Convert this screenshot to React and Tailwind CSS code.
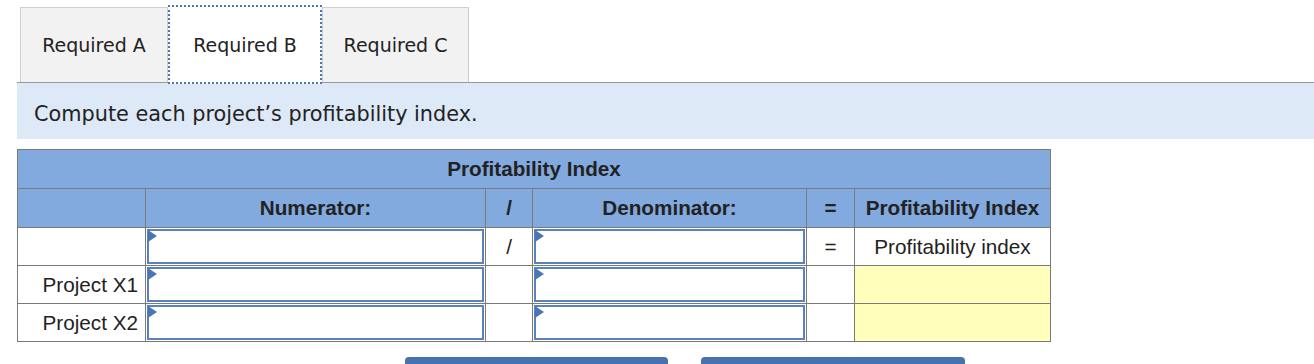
import React from "react";

const tabs = [
  { label: "Required A", w: "w-[148px]" },
  { label: "Required B", w: "w-[154px]", active: true },
  { label: "Required C", w: "w-[147px]" },
];

function Entry() {
  return (
    <div className="relative h-[35px] border-2 border-[#5a83be] bg-white">
      <span className="absolute left-[-1px] top-[-1px] h-0 w-0 border-y-[6px] border-l-[9px] border-y-transparent border-l-[#4a76b5]" />
    </div>
  );
}

function App() {
  const cell = "border border-[#7a7a7a]";
  const head = "border border-[#7a7a7a] bg-[#82aadf] font-bold text-center";

  return (
    <div className="min-h-screen bg-white pl-[17px] pt-[7px] text-[#222]">
      <div className="ml-[3px] flex font-['DejaVu_Sans',sans-serif] text-[19px]">
        {tabs.map((t) =>
          t.active ? (
            <div
              key={t.label}
              className={`${t.w} relative z-10 -my-[2px] flex h-[79px] items-center justify-center bg-white pt-[2px] outline-2 outline-dotted -outline-offset-2 outline-[#4a76b5]`}
            >
              {t.label}
            </div>
          ) : (
            <div
              key={t.label}
              className={`${t.w} flex h-[75px] items-center justify-center border-x border-t border-[#cfcfcf] bg-[#f2f2f2]`}
            >
              {t.label}
            </div>
          )
        )}
      </div>

      <div className="border-t border-[#9a9a9a]" />
      <div className="flex h-[56px] items-center bg-[#dee9f7] pl-[17px] pt-[7px] font-['DejaVu_Sans',sans-serif] text-[20.8px]">
        Compute each project’s profitability index.
      </div>

      <table className="mt-[10px] w-[1033px] table-fixed border-collapse font-['Liberation_Sans',Arial,sans-serif] text-[20.7px]">
        <colgroup>
          <col className="w-[128px]" />
          <col className="w-[340px]" />
          <col className="w-[47px]" />
          <col className="w-[274px]" />
          <col className="w-[48px]" />
          <col className="w-[196px]" />
        </colgroup>
        <tbody>
          <tr className="h-[39px]">
            <td colSpan={6} className={head}>
              Profitability Index
            </td>
          </tr>
          <tr className="h-[39px]">
            <td className={head}></td>
            <td className={head}>Numerator:</td>
            <td className={head}>/</td>
            <td className={head}>Denominator:</td>
            <td className={head}>=</td>
            <td className={head}>Profitability Index</td>
          </tr>
          <tr className="h-[38px]">
            <td className={cell}></td>
            <td className={`${cell} p-px`}>
              <Entry />
            </td>
            <td className={`${cell} text-center`}>/</td>
            <td className={`${cell} p-px`}>
              <Entry />
            </td>
            <td className={`${cell} text-center`}>=</td>
            <td className={`${cell} text-center`}>Profitability index</td>
          </tr>
          {["Project X1", "Project X2"].map((p) => (
            <tr key={p} className="h-[38px]">
              <td className={`${cell} pr-[7px] text-right`}>{p}</td>
              <td className={`${cell} p-px`}>
                <Entry />
              </td>
              <td className={cell}></td>
              <td className={`${cell} p-px`}>
                <Entry />
              </td>
              <td className={cell}></td>
              <td className={`${cell} bg-[#ffffbb]`}></td>
            </tr>
          ))}
        </tbody>
      </table>

      <div className="ml-[388px] mt-[15px] flex gap-[33px]">
        <div className="h-[40px] w-[263px] rounded-t-[4px] bg-[#4672b0]" />
        <div className="h-[40px] w-[264px] rounded-t-[4px] bg-[#4672b0]" />
      </div>
    </div>
  );
}

export default App;
